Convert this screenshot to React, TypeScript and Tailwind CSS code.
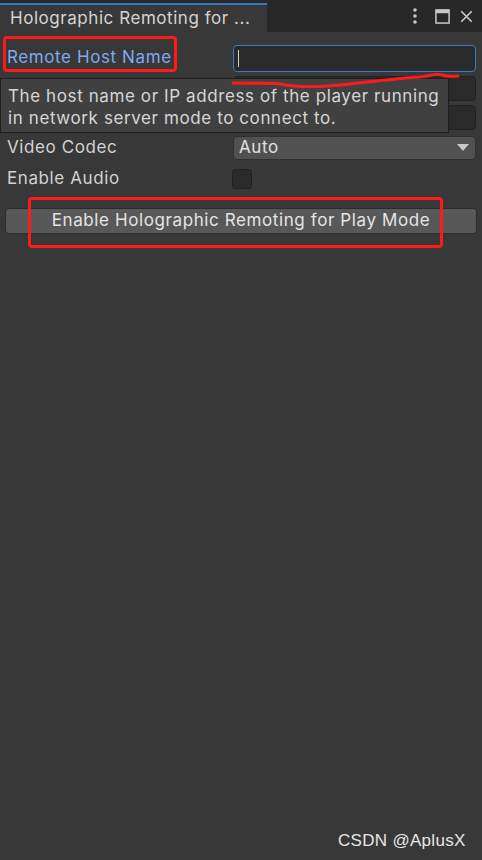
import React from "react";

export default function App() {
  const font = { fontFamily: "Inter, 'Noto Sans', sans-serif" };
  return (
    <div className="w-[482px] h-[860px] bg-[#383838] flex flex-col relative overflow-hidden text-[#d2d2d2]" style={font}>
      {/* Tab bar */}
      <div className="h-[32px] bg-[#282828] flex items-end relative shrink-0">
        <div className="w-[267px] h-[29px] bg-[#383838] border-t-[2px] border-[#3a79bb] flex items-center pl-[10px] text-[17px] tracking-[0.55px] text-[#d4d4d4]">
          Holographic Remoting for ...
        </div>
        <div className="absolute right-[9px] top-[7px] flex items-center">
          <svg width="6" height="18" viewBox="0 0 6 18" className="mr-[17px]"><circle cx="3" cy="3" r="1.8" fill="#c8c8c8"/><circle cx="3" cy="9" r="1.8" fill="#c8c8c8"/><circle cx="3" cy="15" r="1.8" fill="#c8c8c8"/></svg>
          <svg width="15" height="15" viewBox="0 0 16 16" className="mr-[10px]"><rect x="1" y="1" width="14" height="14" fill="none" stroke="#c8c8c8" strokeWidth="1.6"/><rect x="1" y="1" width="14" height="3.5" fill="#c8c8c8"/></svg>
          <svg width="13" height="13" viewBox="0 0 16 16"><path d="M1.5 1.5 L14.5 14.5 M14.5 1.5 L1.5 14.5" stroke="#c8c8c8" strokeWidth="2"/></svg>
        </div>
      </div>

      {/* Content */}
      <div className="flex flex-col pt-[12px] px-[6px] relative text-[17px] tracking-[0.6px]">
        {/* Row 1 */}
        <div className="flex items-center h-[27px] pt-[1px]">
          <div className="w-[227px] pl-[1px] text-[#7fa9ee]">Remote Host Name</div>
          <div className="flex-1 h-[27px] bg-[#2a2a2a] border border-[#3b7bc4] rounded-[4px] flex items-center pl-[4px]">
            <div className="w-[1px] h-[17px] bg-[#cfcfcf]" />
          </div>
        </div>
        {/* Row 2 */}
        <div className="flex items-center h-[25px] mt-[5px]">
          <div className="w-[227px]" />
          <div className="flex-1 h-[25px] bg-[#2a2a2a] border border-[#212121] rounded-[4px]" />
        </div>
        {/* Row 3 */}
        <div className="flex items-center h-[25px] mt-[4px]">
          <div className="w-[227px]" />
          <div className="flex-1 h-[25px] bg-[#2a2a2a] border border-[#212121] rounded-[4px]" />
        </div>
        {/* Video Codec */}
        <div className="flex items-center h-[24px] mt-[6px]">
          <div className="w-[227px] pl-[1px]">Video Codec</div>
          <div className="flex-1 h-[24px] bg-[#515151] border border-[#303030] rounded-[4px] flex items-center justify-between pl-[5px] pr-[6px] text-[#e0e0e0]">
            <span>Auto</span>
            <svg width="12" height="8" viewBox="0 0 12 8"><path d="M0 0 L12 0 L6 7 Z" fill="#c8c8c8"/></svg>
          </div>
        </div>
        {/* Enable Audio */}
        <div className="flex items-center h-[24px] mt-[7px]">
          <div className="w-[226px] pl-[1px]">Enable Audio</div>
          <div className="w-[20px] h-[20px] bg-[#2a2a2a] border border-[#212121] rounded-[3px]" />
        </div>
        {/* Button */}
        <div className="mt-[17px] mx-[-1px] h-[26px] bg-[#585858] border border-[#2d2d2d] rounded-[4px] flex items-center justify-center text-[#e4e4e4]">
          Enable Holographic Remoting for Play Mode
        </div>

        {/* Tooltip overlay */}
        <div className="absolute left-0 top-[46px] w-[449px] h-[55px] bg-[#404040] border border-[#1e1e1e] px-[7px] pt-[6px] leading-[22px] text-[#d6d6d6]">
          <div>The host name or IP address of the player running</div>
          <div>in network server mode to connect to.</div>
        </div>

        {/* Red annotations */}
        <div className="absolute left-[3px] top-[4px] w-[174px] h-[36px] border-[3px] border-[#ff1a1a] rounded-[4px]" />
        <div className="absolute left-[28px] top-[165px] w-[415px] h-[51px] border-[3px] border-[#ff1a1a] rounded-[4px]" />
        <svg className="absolute left-[230px] top-[40px]" width="232" height="16" viewBox="0 0 232 16">
          <path d="M3 11 C30 11, 40 11, 50 12 C70 16, 90 15, 120 12 C150 9, 170 6, 190 5 C200 4, 205 1, 212 3 C218 5, 222 4, 228 4" fill="none" stroke="#ff1a1a" strokeWidth="3" strokeLinecap="round"/>
        </svg>
      </div>

      <div className="absolute left-[338px] top-[828px] text-[17px] tracking-[0.3px] text-[#e6e6e6]" style={{ fontFamily: "'Liberation Sans', Arial, sans-serif" }}>
        CSDN @AplusX
      </div>
    </div>
  );
}
